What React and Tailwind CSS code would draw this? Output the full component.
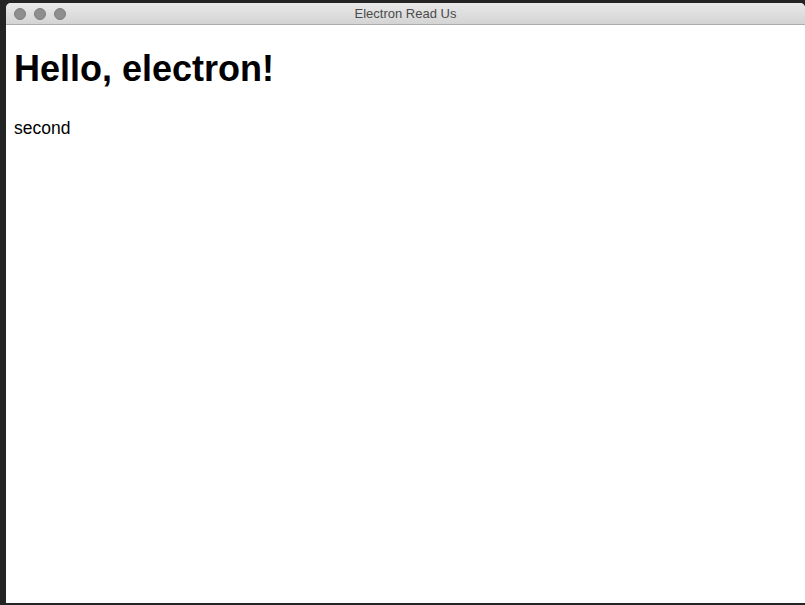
import React from 'react';

const TrafficLight = () => (
  <span className="block w-3 h-3 rounded-full bg-[#8e8e8e] border border-[#7d7d7d]" />
);

const App = () => {
  return (
    <div className="w-[805px] h-[605px] bg-[#242424] pt-[3px] pl-[6px] overflow-hidden">
      <div className="w-[799px] h-[600px] flex flex-col bg-white rounded-t-[5px] overflow-hidden">
        <div className="relative h-[22px] flex items-center shrink-0 bg-gradient-to-b from-[#e9e9e9] to-[#d4d4d4] border-b border-[#acacac]">
          <div className="flex items-center gap-2 pl-2">
            <TrafficLight />
            <TrafficLight />
            <TrafficLight />
          </div>
          <div className="absolute inset-0 flex items-center justify-center text-[13px] text-[#4b4b4b] font-['Liberation_Sans',Arial,sans-serif]">
            Electron Read Us
          </div>
        </div>
        <div className="flex-1 px-2 font-['Liberation_Sans',Arial,sans-serif] text-black">
          <h1 className="mt-[26px] text-[36px] leading-none font-bold">Hello, electron!</h1>
          <p className="mt-[33px] text-[17.5px] leading-none">second</p>
        </div>
      </div>
    </div>
  );
};

export default App;
